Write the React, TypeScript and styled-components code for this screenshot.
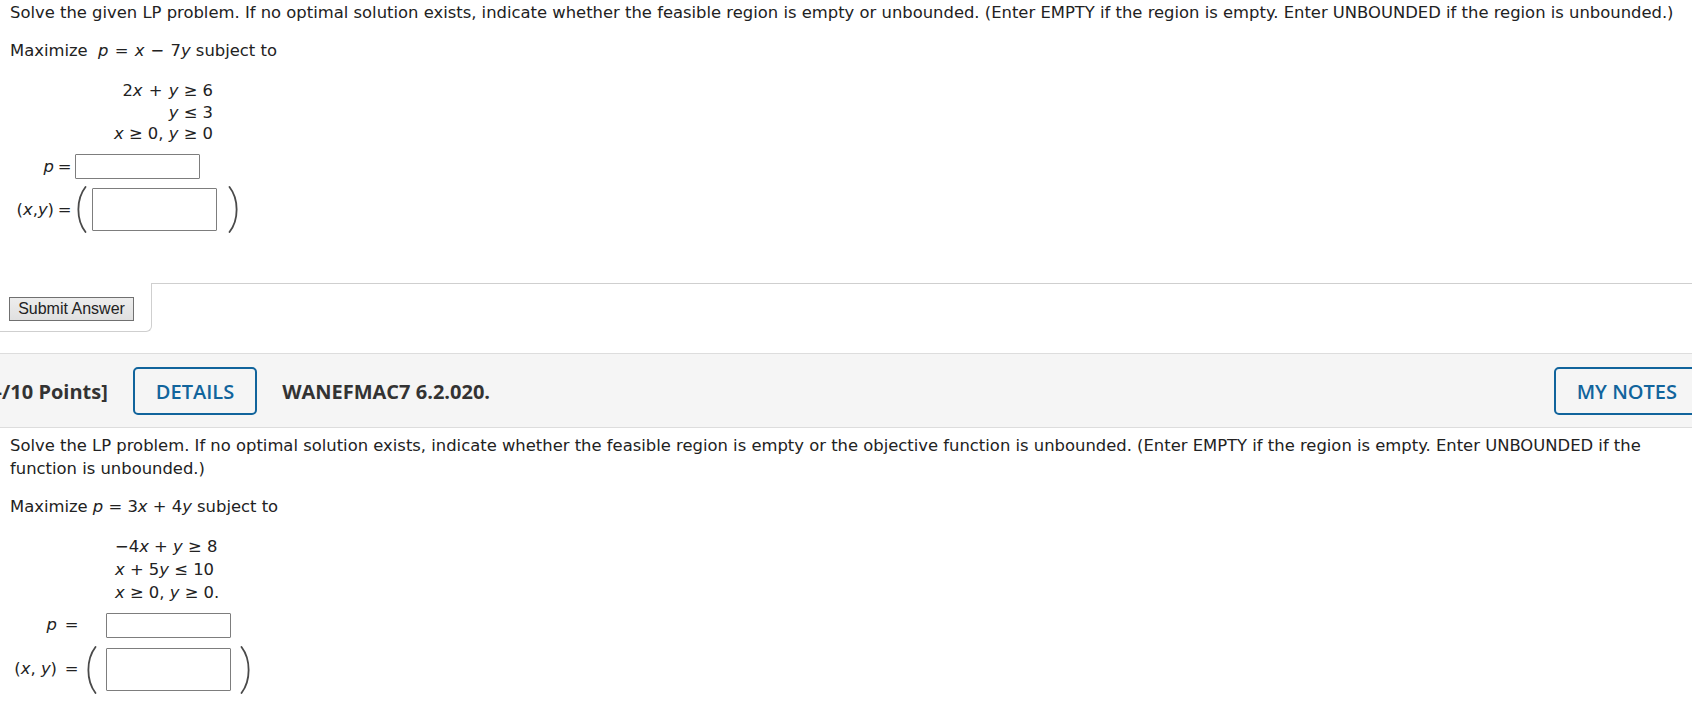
import React from 'react';
import styled, { createGlobalStyle } from 'styled-components';

const GlobalStyle = createGlobalStyle`
  html, body {
    margin: 0;
    padding: 0;
    background: #fff;
  }
  body {
    overflow: hidden;
    font-family: "DejaVu Sans", Verdana, sans-serif;
    font-size: 16.4px;
    color: #222;
  }
`;

const Page = styled.div`
  width: 1692px;
`;

const Problem = styled.section<{ $pt: number }>`
  padding: ${(p) => p.$pt}px 8px 0 10px;
`;

const Para = styled.p<{ $mb?: number }>`
  margin: 0 0 ${(p) => p.$mb ?? 0}px;
  line-height: 22.4px;
`;

const Var = styled.i`
  font-style: italic;
`;

const Op = styled.span<{ $m?: number }>`
  margin: 0 ${(p) => p.$m ?? 0}px;
`;

const Constraints = styled.div<{ $align: 'left' | 'right'; $width?: number; $indent?: number; $lh: number; $mt: number }>`
  margin-top: ${(p) => p.$mt}px;
  padding-left: ${(p) => p.$indent ?? 0}px;
  width: ${(p) => (p.$width ? `${p.$width}px` : 'auto')};
  text-align: ${(p) => p.$align};
  line-height: ${(p) => p.$lh}px;
  white-space: nowrap;
`;

const AnswerGrid = styled.div<{ $cols: string; $rowGap: number; $mt: number }>`
  display: grid;
  grid-template-columns: ${(p) => p.$cols};
  row-gap: ${(p) => p.$rowGap}px;
  align-items: center;
  margin-top: ${(p) => p.$mt}px;
  line-height: 22.4px;
`;

const Label = styled.span`
  text-align: right;
  white-space: nowrap;
`;

const Eq = styled.span`
  text-align: center;
`;

const Cell = styled.div`
  display: flex;
  align-items: center;
`;

const AnswerBox = styled.div<{ $h: number }>`
  box-sizing: border-box;
  width: 125px;
  height: ${(p) => p.$h}px;
  border: 1px solid #7d7d7d;
  border-radius: 1px;
  background: #fff;
`;

const ParenSvg = styled.svg<{ $ml?: number; $mr?: number }>`
  display: block;
  flex: none;
  margin-left: ${(p) => p.$ml ?? 0}px;
  margin-right: ${(p) => p.$mr ?? 0}px;
`;

const Paren: React.FC<{ side: 'open' | 'close'; h: number; ml?: number; mr?: number }> = ({ side, h, ml, mr }) => {
  const d =
    side === 'open'
      ? `M10.5 1 C 1 ${h * 0.28}, 1 ${h * 0.72}, 10.5 ${h - 1}`
      : `M1.5 1 C 11 ${h * 0.28}, 11 ${h * 0.72}, 1.5 ${h - 1}`;
  return (
    <ParenSvg width={12} height={h} viewBox={`0 0 12 ${h}`} $ml={ml} $mr={mr}>
      <path d={d} fill="none" stroke="#4a4a4a" strokeWidth={1.8} strokeLinecap="round" />
    </ParenSvg>
  );
};

const SubmitRow = styled.div`
  display: flex;
  margin-top: 50px;
`;

const SubmitTab = styled.div`
  padding: 14px 17px 10px 9px;
  border-right: 1px solid #cfcfcf;
  border-bottom: 1px solid #cfcfcf;
  border-bottom-right-radius: 6px;
`;

const TabFill = styled.div`
  flex: 1;
  border-top: 1px solid #cfcfcf;
`;

const SubmitButton = styled.button`
  display: block;
  box-sizing: border-box;
  width: 125px;
  height: 24px;
  padding: 0 6px;
  margin: 0;
  font-family: "Liberation Sans", Arial, sans-serif;
  font-size: 16px;
  line-height: 20px;
  color: #222;
  background: linear-gradient(#ededed, #e0e0e0);
  border: 1px solid #707070;
  border-radius: 0;
  white-space: nowrap;
`;

const QuestionBar = styled.div`
  display: flex;
  align-items: center;
  margin-top: 21px;
  padding: 13px 0 12px;
  background: #f5f5f5;
  border-top: 1px solid #dddddd;
  border-bottom: 1px solid #dddddd;
  font-family: "Open Sans", "Liberation Sans", sans-serif;
  font-size: 20px;
`;

const BarText = styled.span<{ $ml: number }>`
  margin-left: ${(p) => p.$ml}px;
  font-weight: 700;
  color: #333;
  white-space: nowrap;
`;

const BarButton = styled.button<{ $push?: boolean }>`
  box-sizing: border-box;
  height: 48px;
  padding: 0 21px;
  margin-left: ${(p) => (p.$push ? 'auto' : '25px')};
  margin-right: ${(p) => (p.$push ? '-8px' : '0')};
  font-family: "Open Sans", "Liberation Sans", sans-serif;
  font-size: 20px;
  font-weight: 600;
  color: #11649c;
  background: #fff0;
  border: 2px solid #11649c;
  border-radius: 5px;
  white-space: nowrap;
`;

export default function App() {
  return (
    <Page>
      <GlobalStyle />
      <Problem $pt={1.5}>
        <Para $mb={16}>
          Solve the given LP problem. If no optimal solution exists, indicate whether the feasible region is empty or
          unbounded. (Enter EMPTY if the region is empty. Enter UNBOUNDED if the region is unbounded.)
        </Para>
        <Para>
          Maximize{'\u00a0 '}
          <Var>p</Var> <Op $m={1}>=</Op> <Var>x</Var> <Op $m={1}>−</Op> 7<Var>y</Var> subject to
        </Para>
        <Constraints $align="right" $width={203} $lh={21.3} $mt={18}>
          <div>
            2<Var>x</Var> <Op $m={1}>+</Op> <Var>y</Var> <Op>≥</Op> 6
          </div>
          <div>
            <Var>y</Var> <Op>≤</Op> 3
          </div>
          <div>
            <Var>x</Var> <Op>≥</Op> 0, <Var>y</Var> <Op>≥</Op> 0
          </div>
        </Constraints>
        <AnswerGrid $cols="44px 21px auto" $rowGap={7} $mt={10}>
          <Label>
            <Var>p</Var>
          </Label>
          <Eq>=</Eq>
          <Cell>
            <AnswerBox $h={25} />
          </Cell>
          <Label>
            (<Var>x</Var>,<Var>y</Var>)
          </Label>
          <Eq>=</Eq>
          <Cell>
            <Paren side="open" h={47} mr={5} />
            <AnswerBox $h={43} />
            <Paren side="close" h={47} ml={11} />
          </Cell>
        </AnswerGrid>
      </Problem>

      <SubmitRow>
        <SubmitTab>
          <SubmitButton>Submit Answer</SubmitButton>
        </SubmitTab>
        <TabFill />
      </SubmitRow>

      <QuestionBar>
        <BarText $ml={-11}>[-/10 Points]</BarText>
        <BarButton>DETAILS</BarButton>
        <BarText $ml={25}>WANEFMAC7 6.2.020.</BarText>
        <BarButton $push>MY NOTES</BarButton>
      </QuestionBar>

      <Problem $pt={7}>
        <Para $mb={16}>
          Solve the LP problem. If no optimal solution exists, indicate whether the feasible region is empty or the
          objective function is unbounded. (Enter EMPTY if the region is empty. Enter UNBOUNDED if the function is
          unbounded.)
        </Para>
        <Para>
          Maximize <Var>p</Var> <Op>=</Op> 3<Var>x</Var> <Op>+</Op> 4<Var>y</Var> subject to
        </Para>
        <Constraints $align="left" $indent={105} $lh={23.3} $mt={16.3}>
          <div>
            −4<Var>x</Var> <Op>+</Op> <Var>y</Var> <Op>≥</Op> 8
          </div>
          <div>
            <Var>x</Var> <Op>+</Op> 5<Var>y</Var> <Op>≤</Op> 10
          </div>
          <div>
            <Var>x</Var> <Op>≥</Op> 0, <Var>y</Var> <Op>≥</Op> 0.
          </div>
        </Constraints>
        <AnswerGrid $cols="47px 29px 20px 134px auto" $rowGap={8} $mt={8}>
          <Label>
            <Var>p</Var>
          </Label>
          <Eq>=</Eq>
          <span />
          <Cell>
            <AnswerBox $h={25} />
          </Cell>
          <span />
          <Label>
            (<Var>x</Var>, <Var>y</Var>)
          </Label>
          <Eq>=</Eq>
          <Cell>
            <Paren side="open" h={48} ml={-1} />
          </Cell>
          <Cell>
            <AnswerBox $h={43} />
          </Cell>
          <Cell>
            <Paren side="close" h={48} />
          </Cell>
        </AnswerGrid>
      </Problem>
    </Page>
  );
}
